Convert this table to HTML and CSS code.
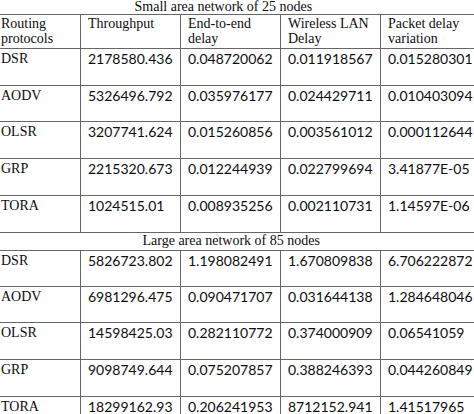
FILE: index.html
```html
<!DOCTYPE html>
<html>
<head>
<meta charset="utf-8">
<link rel="stylesheet" href="styles.css">
</head>
<body>
<table class="grid">
  <colgroup>
    <col class="c-label">
    <col class="c-num">
    <col class="c-num">
    <col class="c-num">
    <col class="c-num">
  </colgroup>
  <tr class="r-title">
    <td colspan="5" class="title title-small">Small area network of 25 nodes</td>
  </tr>
  <tr class="r-head">
    <td class="head">Routing protocols</td>
    <td class="head">Throughput</td>
    <td class="head">End-to-end delay</td>
    <td class="head">Wireless LAN Delay</td>
    <td class="head">Packet delay variation</td>
  </tr>
  <tr class="r-37">
    <td class="label">DSR</td>
    <td class="num">2178580.436</td>
    <td class="num">0.048720062</td>
    <td class="num">0.011918567</td>
    <td class="num">0.015280301</td>
  </tr>
  <tr class="r-36">
    <td class="label">AODV</td>
    <td class="num">5326496.792</td>
    <td class="num">0.035976177</td>
    <td class="num">0.024429711</td>
    <td class="num">0.010403094</td>
  </tr>
  <tr class="r-37">
    <td class="label">OLSR</td>
    <td class="num">3207741.624</td>
    <td class="num">0.015260856</td>
    <td class="num">0.003561012</td>
    <td class="num">0.000112644</td>
  </tr>
  <tr class="r-37">
    <td class="label">GRP</td>
    <td class="num">2215320.673</td>
    <td class="num">0.012244939</td>
    <td class="num">0.022799694</td>
    <td class="num">3.41877E-05</td>
  </tr>
  <tr class="r-37">
    <td class="label">TORA</td>
    <td class="num">1024515.01</td>
    <td class="num">0.008935256</td>
    <td class="num">0.002110731</td>
    <td class="num">1.14597E-06</td>
  </tr>
  <tr class="r-sec">
    <td colspan="5" class="title title-large">Large area network of 85 nodes</td>
  </tr>
  <tr class="r-36">
    <td class="label">DSR</td>
    <td class="num">5826723.802</td>
    <td class="num">1.198082491</td>
    <td class="num">1.670809838</td>
    <td class="num">6.706222872</td>
  </tr>
  <tr class="r-36">
    <td class="label">AODV</td>
    <td class="num">6981296.475</td>
    <td class="num">0.090471707</td>
    <td class="num">0.031644138</td>
    <td class="num">1.284648046</td>
  </tr>
  <tr class="r-37">
    <td class="label">OLSR</td>
    <td class="num">14598425.03</td>
    <td class="num">0.282110772</td>
    <td class="num">0.374000909</td>
    <td class="num">0.06541059</td>
  </tr>
  <tr class="r-37">
    <td class="label">GRP</td>
    <td class="num">9098749.644</td>
    <td class="num">0.075207857</td>
    <td class="num">0.388246393</td>
    <td class="num">0.044260849</td>
  </tr>
  <tr class="r-37">
    <td class="label">TORA</td>
    <td class="num">18299162.93</td>
    <td class="num">0.206241953</td>
    <td class="num">8712152.941</td>
    <td class="num">1.41517965</td>
  </tr>
</table>
</body>
</html>
```
FILE: styles.css
```css
html, body {
  margin: 0;
  padding: 0;
  background: #ffffff;
  overflow: hidden;
  width: 474px;
  height: 414px;
}

.grid {
  border-collapse: collapse;
  table-layout: fixed;
  width: 488px;
  margin-left: -7px;
  color: #0d0d0d;
}

.c-label { width: 87px; }
.c-num { width: 100px; }

.grid td {
  border: 1px solid #666666;
  padding: 2px 7px 0 7px;
  vertical-align: top;
  white-space: nowrap;
  overflow: hidden;
}

.r-title { height: 14px; }
.r-head { height: 34px; }
.r-36 { height: 36px; }
.r-37 { height: 37px; }
.r-sec { height: 18px; }

.grid td.title {
  font-family: "Liberation Serif", "Times New Roman", serif;
  font-size: 14px;
  line-height: 14px;
  padding-top: 0;
  padding-bottom: 0;
  border-left: none;
  border-right: none;
}

.grid td.title-small {
  border-top: none;
  padding-left: 141px;
  line-height: 13px;
}

.grid td.title-large {
  padding-left: 149px;
  padding-top: 1px;
}

.grid td.head {
  font-family: "Liberation Serif", "Times New Roman", serif;
  font-size: 14px;
  line-height: 15px;
  padding-top: 1px;
  white-space: normal;
}

.grid td.label {
  font-family: "Liberation Serif", "Times New Roman", serif;
  font-size: 14px;
  line-height: 15px;
  padding-top: 2px;
}

.grid td.num {
  font-family: Lato, "Open Sans", sans-serif;
  font-size: 14px;
  line-height: 15px;
  padding-top: 2px;
}
```
